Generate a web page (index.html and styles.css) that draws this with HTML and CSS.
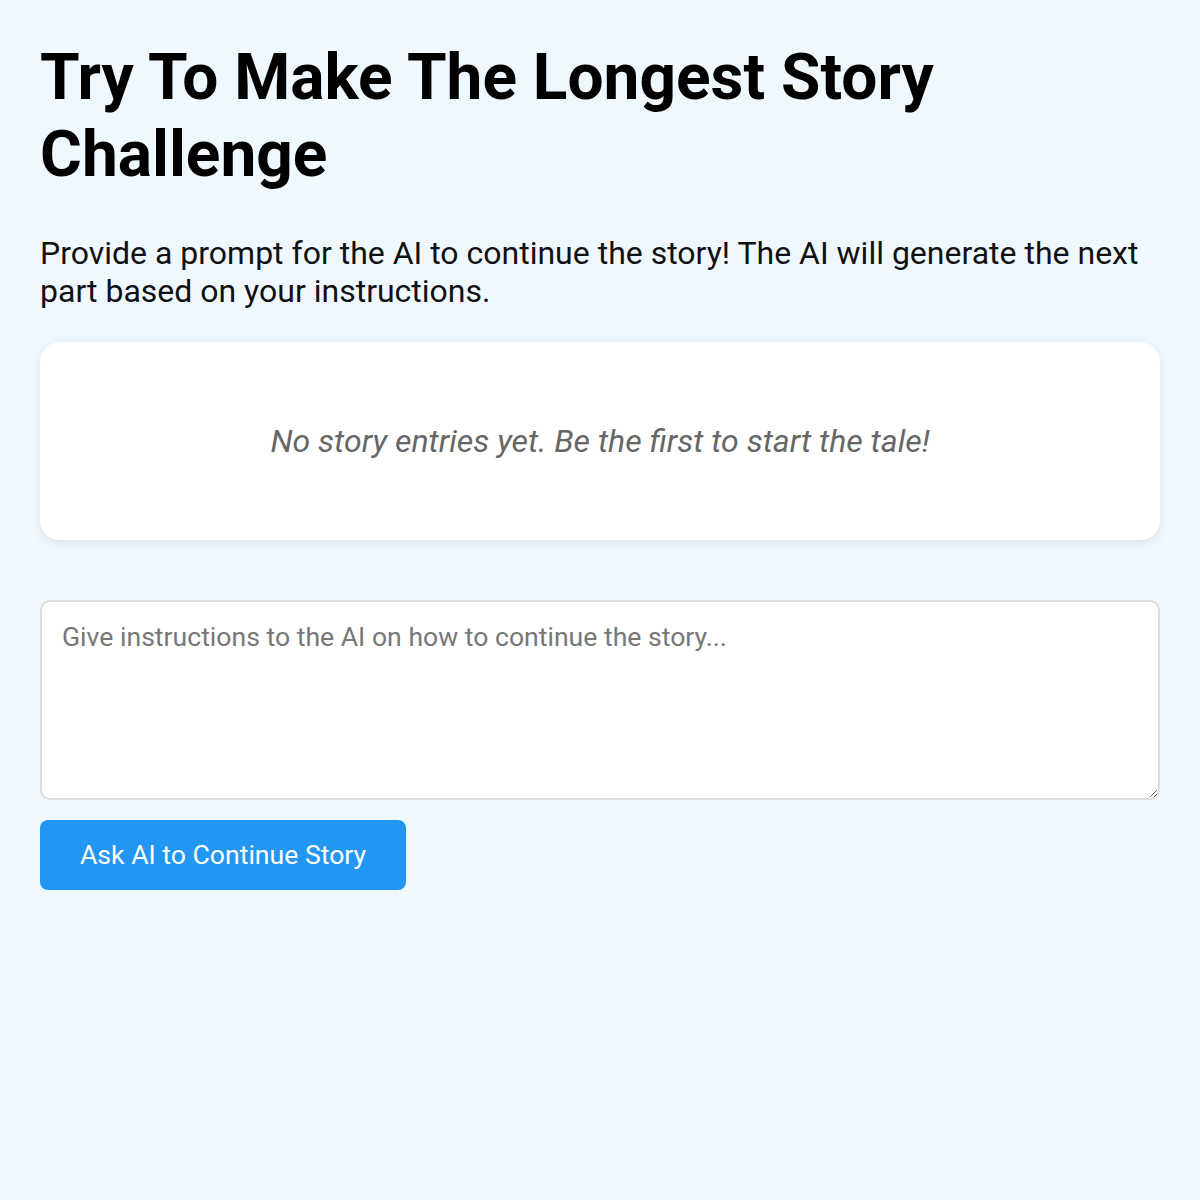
FILE: index.html
```html
<!DOCTYPE html>
<html>
	<head>
		<meta http-equiv="content-type" content="text/html; charset=utf-8">
		<title>Longest Story Challenge</title>
		<link rel="stylesheet" href="styles.css">
	</head>
	<body>
		<div class="page">
			<h1 class="title">Try To Make The Longest Story Challenge</h1>
			<p class="intro">Provide a prompt for the AI to continue the story! The AI will generate the next part based on your instructions.</p>

			<div id="story" class="story">
				<p class="empty">No story entries yet. Be the first to start the tale!</p>
			</div>

			<textarea id="prompt" class="prompt" placeholder="Give instructions to the AI on how to continue the story..."></textarea>
			<button id="button" class="ask">Ask AI to Continue Story</button>
		</div>
	</body>
</html>
```

FILE: styles.css
```css
body {
	margin: 0;
	padding: 40px;
	background-color: #f0f8ff;
	font-family: Roboto, "Liberation Sans", sans-serif;
	color: #000000;
}

.page {
	display: flex;
	flex-direction: column;
	align-items: flex-start;
}

.title {
	margin: 0 0 40px 0;
	font-size: 64px;
	line-height: 1.2;
	font-weight: 700;
}

.intro {
	margin: 0 0 32px 0;
	font-size: 32px;
	line-height: 38px;
	color: #111111;
}

.story {
	box-sizing: border-box;
	width: 100%;
	padding: 80px 20px;
	background-color: #ffffff;
	border-radius: 20px;
	box-shadow: 0 4px 12px rgba(0, 0, 0, 0.08);
	margin-bottom: 60px;
}

.empty {
	margin: 0;
	text-align: center;
	font-style: italic;
	font-size: 32px;
	line-height: 38px;
	color: #666666;
}

.prompt {
	box-sizing: border-box;
	width: 100%;
	height: 200px;
	padding: 19px 20px;
	border: 2px solid #dddddd;
	border-radius: 10px;
	font-family: Roboto, "Liberation Sans", sans-serif;
	font-size: 26.6px;
	color: #222222;
	background-color: #ffffff;
	margin-bottom: 20px;
}

.prompt::placeholder {
	color: #777777;
}

.ask {
	padding: 0 40px;
	height: 70px;
	font-family: Roboto, "Liberation Sans", sans-serif;
	font-size: 26.6px;
	color: #ffffff;
	background-color: #2196f3;
	border: none;
	border-radius: 8px;
	cursor: pointer;
}
```
